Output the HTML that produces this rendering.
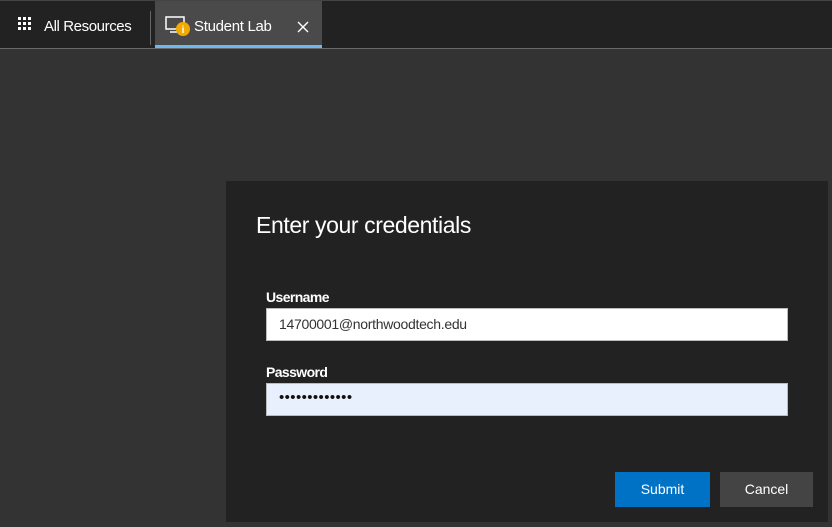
<!DOCTYPE html>
<html><head><style>
body{margin:0;width:832px;height:527px;background:#333;font-family:"Segoe UI","Liberation Sans",sans-serif;position:relative;overflow:hidden}
.top{position:absolute;left:0;top:0;width:832px;height:49px;background:#222;border-bottom:1px solid #6a6a6a;border-top:1px solid #444;box-sizing:border-box}
.abs{position:absolute}
.dlg{left:226px;top:181px;width:602px;height:341px;background:#222}
.lbl{color:#fff;font-weight:bold;font-size:14px;letter-spacing:-0.6px}
.inp{left:40px;width:522px;height:33px;box-sizing:border-box;border:1px solid #bbb;font-size:14px;color:#333;padding:7px 12px;letter-spacing:-0.3px}
.btn{top:291px;height:35px;color:#fff;font-size:14px;text-align:center;line-height:35px}
</style></head><body>
<div class="top">
 <svg class="abs" style="left:18px;top:16px" width="14" height="14"><g fill="#fff"><rect x="0" y="0" width="3" height="3"/><rect x="5" y="0" width="3" height="3"/><rect x="10" y="0" width="3" height="3"/><rect x="0" y="5" width="3" height="3"/><rect x="5" y="5" width="3" height="3"/><rect x="10" y="5" width="3" height="3"/><rect x="0" y="10" width="3" height="3"/><rect x="5" y="10" width="3" height="3"/><rect x="10" y="10" width="3" height="3"/></g></svg>
 <div class="abs" style="left:44px;top:17px;color:#fff;font-size:15px;letter-spacing:-0.4px">All Resources</div>
 <div class="abs" style="left:150px;top:10px;width:1px;height:34px;background:#666"></div>
 <div class="abs" style="left:155px;top:0;width:167px;height:47px;background:#4a4a4a;border-bottom:3px solid #6cb8ef;box-sizing:border-box">
  <svg class="abs" style="left:10px;top:15px" width="26" height="22"><rect x="1" y="1" width="18" height="12" fill="none" stroke="#fff" stroke-width="1.5"/><path d="M5 16h7" stroke="#fff" stroke-width="1.5"/><circle cx="18" cy="13" r="7" fill="#f2a900"/><text x="18" y="17" font-size="10" fill="#fff" text-anchor="middle" font-family="Liberation Sans" font-weight="bold">i</text></svg>
  <div class="abs" style="left:39px;top:17px;color:#fff;font-size:15px;letter-spacing:-0.3px">Student Lab</div>
  <svg class="abs" style="left:142px;top:20px" width="12" height="12"><path d="M1 1L11 11M11 1L1 11" stroke="#fff" stroke-width="1.4"/></svg>
 </div>
</div>
<div class="abs dlg">
 <div class="abs" style="left:30px;top:31px;color:#fff;font-size:23px;letter-spacing:-0.4px">Enter your credentials</div>
 <div class="abs lbl" style="left:40px;top:108px">Username</div>
 <div class="abs inp" style="top:127px;background:#fff">14700001@northwoodtech.edu</div>
 <div class="abs lbl" style="left:40px;top:183px">Password</div>
 <div class="abs inp" style="top:202px;background:#e8f0fe;font-size:15px;padding-top:5px;letter-spacing:0.4px;color:#111">•••••••••••••</div>
 <div class="abs btn" style="left:389px;width:95px;background:#0072c6">Submit</div>
 <div class="abs btn" style="left:494px;width:93px;background:#444">Cancel</div>
</div>
</body></html>
